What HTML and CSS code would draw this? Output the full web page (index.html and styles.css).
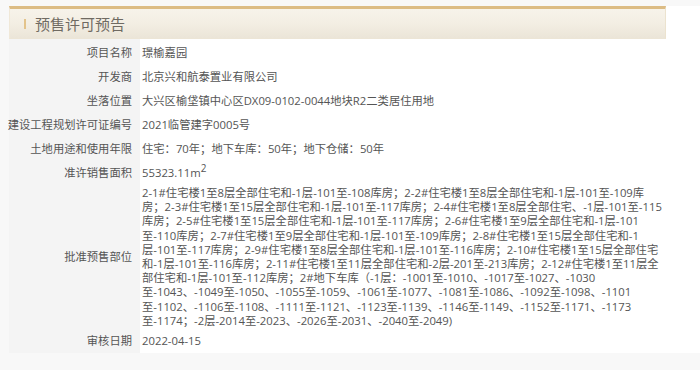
FILE: index.html
```html
<!DOCTYPE html>
<html lang="zh-CN">
<head>
<meta charset="utf-8">
<title>预售许可预告</title>
<link rel="stylesheet" href="styles.css">
</head>
<body>
<div class="panel">
  <div class="head">
    <span class="accent"></span>
    <h2 class="title">预售许可预告</h2>
  </div>
  <div class="info">
    <div class="lab first">项目名称</div><div class="val first">璟榆嘉园</div>
    <div class="lab">开发商</div><div class="val">北京兴和航泰置业有限公司</div>
    <div class="lab">坐落位置</div><div class="val">大兴区榆垡镇中心区DX09-0102-0044地块R2二类居住用地</div>
    <div class="lab">建设工程规划许可证编号</div><div class="val">2021临管建字0005号</div>
    <div class="lab">土地用途和使用年限</div><div class="val">住宅：70年；地下车库：50年；地下仓储：50年</div>
    <div class="lab">准许销售面积</div><div class="val">55323.11m<sup>2</sup></div>
    <div class="lab">批准预售部位</div>
    <div class="val block">2-1#住宅楼1至8层全部住宅和-1层-101至-108库房；2-2#住宅楼1至8层全部住宅和-1层-101至-109库<br>房；2-3#住宅楼1至15层全部住宅和-1层-101至-117库房；2-4#住宅楼1至8层全部住宅、-1层-101至-115<br>库房；2-5#住宅楼1至15层全部住宅和-1层-101至-117库房；2-6#住宅楼1至9层全部住宅和-1层-101<br>至-110库房；2-7#住宅楼1至9层全部住宅和-1层-101至-109库房；2-8#住宅楼1至15层全部住宅和-1<br>层-101至-117库房；2-9#住宅楼1至8层全部住宅和-1层-101至-116库房；2-10#住宅楼1至15层全部住宅<br>和-1层-101至-116库房；2-11#住宅楼1至11层全部住宅和-2层-201至-213库房；2-12#住宅楼1至11层全<br>部住宅和-1层-101至-112库房；2#地下车库（-1层：-1001至-1010、-1017至-1027、-1030<br>至-1043、-1049至-1050、-1055至-1059、-1061至-1077、-1081至-1086、-1092至-1098、-1101<br>至-1102、-1106至-1108、-1111至-1121、-1123至-1139、-1146至-1149、-1152至-1171、-1173<br>至-1174；-2层-2014至-2023、-2026至-2031、-2040至-2049)</div>
    <div class="lab">审核日期</div><div class="val">2022-04-15</div>
  </div>
</div>
</body>
</html>
```
FILE: styles.css
```css
html, body {
  margin: 0;
  padding: 0;
}
body {
  background: #f8f8f8;
  padding: 6px 0 0 9px;
  font-family: "Open Sans", "Noto Sans CJK SC", sans-serif;
  font-size: 11.3px;
  color: #555;
}
.panel {
  background: #fff;
}
.head {
  width: 657px;
  height: 33px;
  box-sizing: border-box;
  border-top: 3px solid #dcbc85;
  border-left: 1px solid #f0e8d8;
  border-right: 1px solid #ece3cf;
  border-bottom: 1px solid #ece5d6;
  background: linear-gradient(#f7f3ea 0%, #f3eee3 50%, #ebe5d8 100%);
  display: flex;
  align-items: center;
  padding-left: 14px;
}
.accent {
  width: 2px;
  height: 10px;
  background: #e3c38a;
  margin-right: 9px;
}
.title {
  margin: 0;
  font-family: "Noto Sans CJK SC", sans-serif;
  font-size: 15px;
  font-weight: normal;
  color: #6f6a62;
  line-height: 1;
}
.info {
  display: grid;
  grid-template-columns: 131px 1fr;
}
.lab {
  background: #f4f4f4;
  display: flex;
  align-items: center;
  justify-content: flex-end;
  white-space: nowrap;
  padding: 5px 8px 5px 0;
  line-height: 14px;
  color: #555;
}
.val {
  padding: 5px 0 5px 2px;
  line-height: 14px;
  white-space: nowrap;
  color: #555;
}
.first {
  padding-top: 7px;
}
.val sup {
  font-size: 10px;
  line-height: 0;
  vertical-align: 5px;
}
.block {
  padding-top: 1px;
  padding-bottom: 1px;
  line-height: 14.2px;
}
```
